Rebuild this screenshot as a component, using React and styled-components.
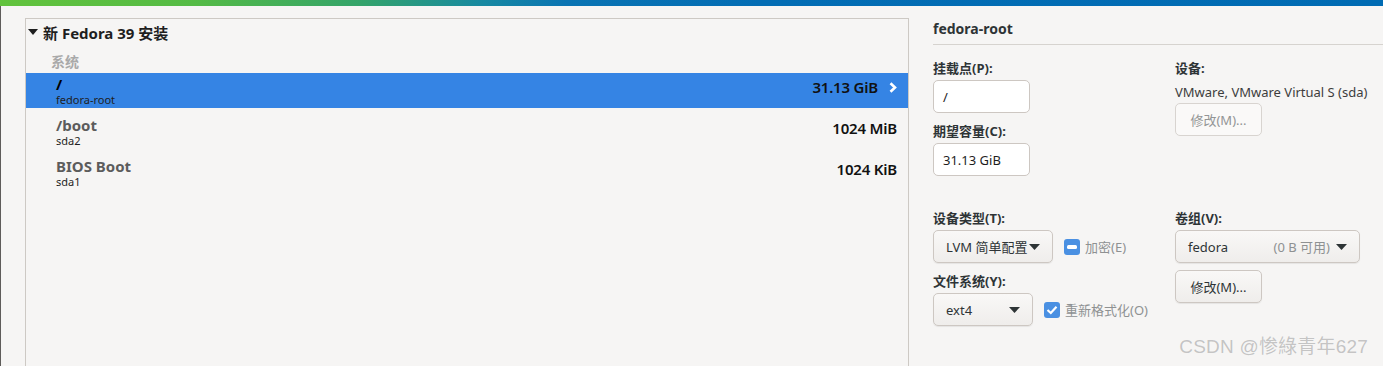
import React from "react";
import styled, { createGlobalStyle } from "styled-components";

const GlobalStyle = createGlobalStyle`
  html, body { margin: 0; padding: 0; background: #f6f5f4; }
  body {
    font-family: "Noto Sans", "Noto Sans CJK SC", sans-serif;
    color: #2e3436;
    -webkit-font-smoothing: antialiased;
  }
`;

const Window = styled.div`
  position: relative;
  width: 1383px;
  height: 366px;
  display: flex;
  flex-direction: column;
  background: #f6f5f4;
  overflow: hidden;
`;

const TopBar = styled.div`
  height: 6px;
  flex: none;
  background: linear-gradient(90deg, #62c33d 0%, #55bb45 14%, #34a46a 26%, #1789a2 35%, #0a74b3 41%, #036db4 55%, #006bb3 100%);
`;

const Body = styled.div`
  flex: 1;
  display: flex;
  border-left: 1px solid #5e5c5a;
  min-height: 0;
`;

const ListArea = styled.div`
  width: 884px;
  flex: none;
  padding: 12px 0 0 24px;
  display: flex;
`;

const Panel = styled.div`
  flex: 1;
  border: 1px solid #cdc9c4;
  border-bottom: none;
  background: #f6f5f4;
  display: flex;
  flex-direction: column;
`;

const GroupHeader = styled.div`
  display: flex;
  align-items: center;
  gap: 5px;
  padding: 3px 0 0 2px;
  height: 20px;
  font-size: 15px;
  font-weight: 700;
  color: #1e1e1e;
`;

const Section = styled.div`
  margin: 12px 0 3px 25px;
  height: 16px;
  line-height: 16px;
  font-size: 14px;
  font-weight: 700;
  color: #a9a9a9;
`;

const Row = styled.div`
  height: 35px;
  margin-bottom: 6px;
  display: flex;
  align-items: flex-start;
  padding: 0 11px 0 30px;
  background: ${(p) => (p.$selected ? "#3584e4" : "transparent")};
`;

const RowText = styled.div`
  flex: 1;
  display: flex;
  flex-direction: column;
  padding-top: 2px;
`;

const RowLabel = styled.div`
  font-size: 15px;
  font-weight: 700;
  line-height: 18px;
  color: ${(p) => (p.$selected ? "#000" : "#5c5c5c")};
`;

const RowSub = styled.div`
  font-size: 11px;
  line-height: 14px;
  color: #1e1e1e;
`;

const RowSize = styled.div`
  margin-top: 5px;
  font-size: 15px;
  font-weight: 600;
  line-height: 18px;
  letter-spacing: -0.2px;
  color: #111;
  display: flex;
  align-items: center;
  gap: 11px;
`;

const Detail = styled.div`
  flex: 1;
  padding-left: 24px;
  display: flex;
  flex-direction: column;
`;

const DetailTitle = styled.div`
  padding: 13px 0 5px;
  line-height: 20px;
  font-size: 14px;
  font-weight: 700;
  color: #2e3436;
  border-bottom: 1px solid #d6d3cf;
`;

const Grid = styled.div`
  display: grid;
  grid-template-columns: 242px 1fr;
  row-gap: 33px;
  padding-top: 14px;
`;

const Col = styled.div`
  display: flex;
  flex-direction: column;
  align-items: flex-start;
`;

const FieldLabel = styled.div`
  font-size: 13px;
  font-weight: 700;
  line-height: 18px;
  color: #2e3436;
  margin-top: ${(p) => p.$top || 0}px;
  margin-bottom: 3px;
`;

const Entry = styled.div`
  box-sizing: border-box;
  width: ${(p) => p.$w}px;
  height: 33px;
  background: #fff;
  border: 1px solid #cdc7c2;
  border-radius: 5px;
  display: flex;
  align-items: center;
  padding: 0 9px;
  font-size: 13px;
  color: #1e1e1e;
`;

const InfoText = styled.div`
  margin-top: 4px;
  font-size: 13px;
  line-height: 16px;
  color: #3d3d3d;
`;

const Button = styled.div`
  box-sizing: border-box;
  width: ${(p) => p.$w}px;
  height: 33px;
  margin-top: ${(p) => p.$top || 0}px;
  border: 1px solid ${(p) => (p.$disabled ? "#d8d4d0" : "#cdc7c2")};
  border-radius: 5px;
  background: ${(p) => (p.$disabled ? "#faf9f8" : "linear-gradient(#f9f8f7, #efedeb)")};
  box-shadow: ${(p) => (p.$disabled ? "none" : "0 1px 1px rgba(0,0,0,0.07)")};
  display: flex;
  align-items: center;
  justify-content: ${(p) => (p.$center ? "center" : "space-between")};
  padding: 0 12px;
  font-size: 13px;
  color: ${(p) => (p.$disabled ? "#929595" : "#2e3436")};
`;

const ComboRow = styled.div`
  display: flex;
  align-items: center;
  gap: 11px;
`;

const Muted = styled.span`
  color: #8e9192;
  margin-left: auto;
  margin-right: 6px;
`;

const Check = styled.div`
  display: flex;
  align-items: center;
  gap: 5px;
  font-size: 13px;
  color: #8e9192;
`;

const Box = styled.div`
  width: 16px;
  height: 16px;
  border-radius: 3px;
  background: #4a90e2;
  display: flex;
  align-items: center;
  justify-content: center;
`;

const Watermark = styled.div`
  position: absolute;
  right: 15px;
  bottom: 8px;
  font-family: "Liberation Sans", "Noto Sans CJK SC", sans-serif;
  font-size: 19px;
  color: rgba(150, 150, 150, 0.55);
  text-shadow: 0 0 1px rgba(255,255,255,0.6);
  letter-spacing: 0.2px;
`;

const Arrow = () => (
  <svg width="11" height="6" viewBox="0 0 11 6"><path d="M0 0h11L5.5 6z" fill="#2e3436" /></svg>
);

const Expander = () => (
  <svg width="10" height="6" viewBox="0 0 10 6"><path d="M0 0h10L5 6z" fill="#1e1e1e" /></svg>
);

const Chevron = () => (
  <svg width="8" height="11" viewBox="0 0 8 11"><path d="M1.5 1.2 L6 5.5 L1.5 9.8" fill="none" stroke="#fff" strokeWidth="2.6" /></svg>
);

const rows = [
  { label: "/", sub: "fedora-root", size: "31.13 GiB", selected: true },
  { label: "/boot", sub: "sda2", size: "1024 MiB" },
  { label: "BIOS Boot", sub: "sda1", size: "1024 KiB" },
];

export default function App() {
  return (
    <Window>
      <GlobalStyle />
      <TopBar />
      <Body>
        <ListArea>
          <Panel>
            <GroupHeader>
              <Expander />
              <span>新 Fedora 39 安装</span>
            </GroupHeader>
            <Section>系统</Section>
            {rows.map((r) => (
              <Row key={r.label} $selected={r.selected}>
                <RowText>
                  <RowLabel $selected={r.selected}>{r.label}</RowLabel>
                  <RowSub>{r.sub}</RowSub>
                </RowText>
                <RowSize>
                  {r.size}
                  {r.selected && <Chevron />}
                </RowSize>
              </Row>
            ))}
          </Panel>
        </ListArea>
        <Detail>
          <DetailTitle>fedora-root</DetailTitle>
          <Grid>
            <Col>
              <FieldLabel>挂载点(P):</FieldLabel>
              <Entry $w={97}>/</Entry>
              <FieldLabel $top={9}>期望容量(C):</FieldLabel>
              <Entry $w={97}>31.13 GiB</Entry>
            </Col>
            <Col>
              <FieldLabel>设备:</FieldLabel>
              <InfoText>VMware, VMware Virtual S (sda)</InfoText>
              <Button $w={87} $top={3} $center $disabled>修改(M)...</Button>
            </Col>
            <Col>
              <FieldLabel>设备类型(T):</FieldLabel>
              <ComboRow>
                <Button $w={120}>LVM 简单配置 <Arrow /></Button>
                <Check>
                  <Box>
                    <svg width="10" height="4" viewBox="0 0 10 4"><rect width="10" height="4" rx="1.5" fill="#fff" /></svg>
                  </Box>
                  加密(E)
                </Check>
              </ComboRow>
              <FieldLabel $top={9}>文件系统(Y):</FieldLabel>
              <ComboRow>
                <Button $w={100}>ext4 <Arrow /></Button>
                <Check>
                  <Box>
                    <svg width="12" height="10" viewBox="0 0 12 10"><path d="M1.5 5 L4.8 8 L10.5 1.8" fill="none" stroke="#fff" strokeWidth="2.2" /></svg>
                  </Box>
                  重新格式化(O)
                </Check>
              </ComboRow>
            </Col>
            <Col>
              <FieldLabel>卷组(V):</FieldLabel>
              <Button $w={185}>
                fedora <Muted>(0 B 可用)</Muted><Arrow />
              </Button>
              <Button $w={87} $top={7} $center>修改(M)...</Button>
            </Col>
          </Grid>
        </Detail>
      </Body>
      <Watermark>CSDN @惨綠青年627</Watermark>
    </Window>
  );
}
